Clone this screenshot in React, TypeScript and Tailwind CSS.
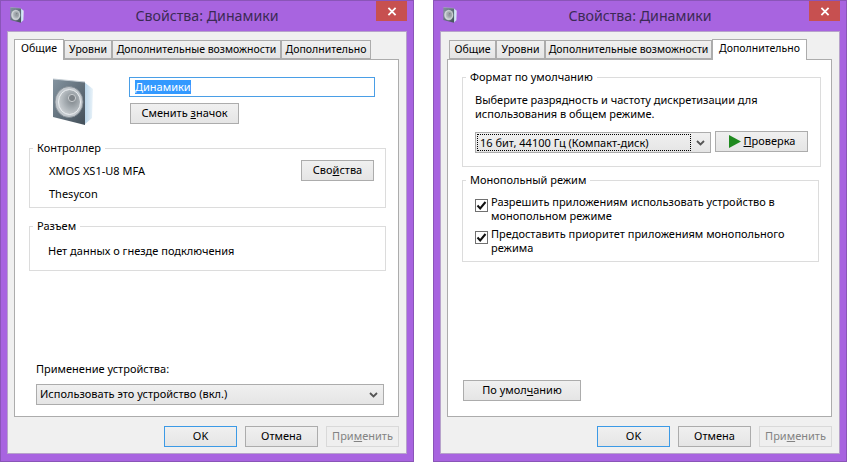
const font = "font-['Noto_Sans',sans-serif]";

function SpeakerIcon({ className, uid }: { className: string; uid: string }) {
  return (
    <svg viewBox="0 0 42 48" className={className}>
      <defs>
        <linearGradient id={`body${uid}`} x1="0" y1="0" x2="1" y2="1">
          <stop offset="0" stopColor="#8494a0" />
          <stop offset="1" stopColor="#434f59" />
        </linearGradient>
        <radialGradient id={`cone${uid}`} cx="0.62" cy="0.42" r="0.75">
          <stop offset="0" stopColor="#7f868b" />
          <stop offset="0.45" stopColor="#a6adb2" />
          <stop offset="1" stopColor="#d8dcdf" />
        </radialGradient>
        <linearGradient id={`side${uid}`} x1="0" y1="0" x2="1" y2="0">
          <stop offset="0" stopColor="#b4d2e8" />
          <stop offset="1" stopColor="#eaf3f9" />
        </linearGradient>
      </defs>
      <path d="M32 4 L41 11 L40 40 L32 47 Z" fill={`url(#side${uid})`} />
      <path d="M1 1 L33 4 L33 47 L1 39 Z" fill={`url(#body${uid})`} />
      <path d="M1 1 L33 4" stroke="#c3ccd3" strokeWidth="1" fill="none" />
      <ellipse cx="17" cy="24" rx="14" ry="15.5" fill="#c3c9ce" stroke="#7f888f" strokeWidth="0.8" />
      <ellipse cx="17.5" cy="24" rx="11" ry="12.5" fill={`url(#cone${uid})`} stroke="#eceff1" strokeWidth="1" />
      <circle cx="20" cy="20" r="3.6" fill="#7d8388" stroke="#c9cdd0" strokeWidth="1" />
    </svg>
  );
}

function Btn({
  className = "",
  state = "normal",
  children,
}: {
  className?: string;
  state?: "normal" | "focus" | "disabled";
  children: React.ReactNode;
}) {
  const look =
    state === "focus"
      ? "border-[#3c9ae6] bg-gradient-to-b from-[#f0f0f0] to-[#e5e5e5] text-black"
      : state === "disabled"
        ? "border-[#d9d9d9] bg-[#efefef] text-[#838383]"
        : "border-[#acacac] bg-gradient-to-b from-[#f0f0f0] to-[#e5e5e5] text-black";
  return (
    <div className={`flex h-[21px] shrink-0 items-center justify-center border text-[11px] ${look} ${className}`}>
      {children}
    </div>
  );
}

function Select({ className = "", children }: { className?: string; children: React.ReactNode }) {
  return (
    <div className={`flex h-[21px] items-center border border-[#acacac] bg-gradient-to-b from-[#f0f0f0] to-[#e5e5e5] pr-[5px] pl-[1px] text-[11px] text-black ${className}`}>
      <div className="min-w-0 flex-1">{children}</div>
      <svg viewBox="0 0 9 6" className="ml-[6px] h-[6px] w-[9px] shrink-0">
        <path d="M1 1 L4.5 4.5 L8 1" fill="none" stroke="#555" strokeWidth="1.8" />
      </svg>
    </div>
  );
}

function Group({
  title,
  className = "",
  children,
}: {
  title: string;
  className?: string;
  children: React.ReactNode;
}) {
  return (
    <fieldset className={`ml-[14px] mr-[12px] border border-[#dcdcdc] ${className}`}>
      <legend className="ml-[3px] px-[4px] text-[11px] leading-[14px] text-black">{title}</legend>
      {children}
    </fieldset>
  );
}

function Check({ children }: { children: React.ReactNode }) {
  return (
    <div className="flex">
      <div className="mt-[4px] flex h-[13px] w-[13px] shrink-0 items-center justify-center border border-[#707070] bg-white">
        <svg viewBox="0 0 11 11" className="h-[11px] w-[11px]">
          <path d="M1.5 5.5 L4.2 8.5 L9.5 2" fill="none" stroke="#111" strokeWidth="2" />
        </svg>
      </div>
      <div className="ml-[3px] text-[11px] leading-[13.5px] text-black">{children}</div>
    </div>
  );
}

const TAB_LABELS = ["Общие", "Уровни", "Дополнительные возможности", "Дополнительно"];

function Tabs({ active, offset, widths }: { active: number; offset: string; widths: string[] }) {
  return (
    <div className={`relative z-10 flex h-[21px] items-end ${offset}`}>
      {TAB_LABELS.map((label, i) =>
        i === active ? (
          <div
            key={label}
            className={`-mb-px flex h-[21px] items-center justify-center border border-b-0 border-[#acacac] bg-white pb-[3px] text-[10.5px] text-black ${widths[i]}`}
          >
            {label}
          </div>
        ) : (
          <div
            key={label}
            className={`flex h-[19px] items-center justify-center whitespace-nowrap border border-[#acacac] bg-gradient-to-b from-[#f0f0f0] to-[#e5e5e5] text-[10.5px] text-black ${widths[i]}`}
          >
            {label}
          </div>
        ),
      )}
    </div>
  );
}

function Dialog({
  active,
  offset,
  widths,
  uid,
  children,
}: {
  active: number;
  offset: string;
  widths: string[];
  uid: string;
  children: React.ReactNode;
}) {
  return (
    <div className="flex h-[462px] w-[414px] shrink-0 flex-col border border-[#8a55b8] bg-[#a864e0] px-[6px] pb-[7px]">
      <div className="relative flex h-[30px] shrink-0 items-center justify-center">
        <div className="absolute top-[6px] left-[3px]">
          <SpeakerIcon uid={`${uid}t`} className="h-[16px] w-[14px]" />
        </div>
        <div className="text-[14.2px] text-[#3b2a55]">Свойства: Динамики</div>
        <div className="absolute top-0 right-0 flex h-[20px] w-[31px] items-center justify-center bg-[#c75050]">
          <svg viewBox="0 0 10 10" className="h-[9px] w-[10px]">
            <path d="M1 1 L9 9 M9 1 L1 9" stroke="#fff" strokeWidth="2" />
          </svg>
        </div>
      </div>
      <div className="flex min-h-0 flex-1 flex-col border border-[#b7a2cb] bg-[#f0f0f0] pt-[6px] pr-[7px] pl-[6px]">
        <Tabs active={active} offset={offset} widths={widths} />
        <div className="flex h-[358px] flex-col border border-[#acacac] bg-white">{children}</div>
        <div className="mt-[9px] flex justify-end gap-[8px]">
          <Btn state="focus" className="w-[73px]">OK</Btn>
          <Btn className="w-[73px]">Отмена</Btn>
          <Btn state="disabled" className="w-[73px]">
            <span>При<u>м</u>енить</span>
          </Btn>
        </div>
      </div>
    </div>
  );
}

export default function App() {
  return (
    <div className={`flex h-[465px] w-[849px] gap-[19px] overflow-hidden bg-white ${font}`}>
      <Dialog active={0} offset="" uid="a" widths={["w-[50px]", "w-[48px]", "w-[169px]", "w-[90px]"]}>
        <div className="flex h-[66px] shrink-0 pt-[17px]">
          <SpeakerIcon uid="c" className="mt-[1px] ml-[37px] h-[48px] w-[42px]" />
          <div className="ml-[35px]">
            <div className="flex h-[20px] w-[246px] items-center border border-[#4a9ee6] bg-white pl-[5px] text-[11px]">
              <span className="bg-[#3399ff] leading-[14px] text-white">Динамики</span>
            </div>
            <Btn className="mt-[6px] ml-[1px] w-[109px]">
              <span>Сменить <u>з</u>начок</span>
            </Btn>
          </div>
        </div>
        <Group title="Контроллер" className="mt-[15px] h-[67px]">
          <div className="flex items-start pl-[19px]">
            <div className="pt-[8px] text-[11px] leading-[16px] text-black">
              <div>XMOS XS1-U8 MFA</div>
              <div className="mt-[7px]">Thesycon</div>
            </div>
            <Btn className="mt-[5px] mr-[11px] ml-auto w-[73px]">
              <span>Сво<u>й</u>ства</span>
            </Btn>
          </div>
        </Group>
        <Group title="Разъем" className="mt-[11px] h-[52px]">
          <div className="pt-[10px] pl-[18px] text-[11px] leading-[16px] text-black">Нет данных о гнезде подключения</div>
        </Group>
        <div className="mt-auto pr-[13px] pb-[11px] pl-[21px]">
          <div className="text-[11px] leading-[16px] text-black">Применение устройства:</div>
          <Select className="mt-[7px] w-[348px]">
            <span className="pl-[2px]">Использовать это устройство (вкл.)</span>
          </Select>
        </div>
      </Dialog>
      <Dialog active={3} offset="pl-[2px]" uid="b" widths={["w-[47px]", "w-[49px]", "w-[167px]", "w-[95px]"]}>
        <Group title="Формат по умолчанию" className="mt-[10px] h-[97px]">
          <div className="px-[12px] pt-[9px]">
            <div className="text-[11px] leading-[14px] text-black">
              Выберите разрядность и частоту дискретизации для
              <br />
              использования в общем режиме.
            </div>
            <div className="mt-[10px] flex items-start">
              <Select className="mt-[1px] w-[236px]">
                <div className="w-[214px] border border-dotted border-black pl-[2px] leading-[15px]">
                  16 бит, 44100 Гц (Компакт-диск)
                </div>
              </Select>
              <Btn className="ml-[4px] w-[93px]">
                <svg viewBox="0 0 13 13" className="mr-[3px] h-[13px] w-[13px]">
                  <path d="M1 0 L13 6.5 L1 13 Z" fill="#1f8a1f" />
                </svg>
                <span><u>П</u>роверка</span>
              </Btn>
            </div>
          </div>
        </Group>
        <Group title="Монопольный режим" className="mt-[6px] h-[89px]">
          <div className="flex flex-col gap-[5px] pt-[8px] pl-[12px]">
            <Check>
              Разрешить приложениям использовать устройство в
              <br />
              монопольном режиме
            </Check>
            <Check>
              Предоставить приоритет приложениям монопольного
              <br />
              режима
            </Check>
          </div>
        </Group>
        <div className="mt-auto pb-[15px] pl-[15px]">
          <Btn className="w-[118px]">
            <span>По умол<u>ч</u>анию</span>
          </Btn>
        </div>
      </Dialog>
    </div>
  );
}
